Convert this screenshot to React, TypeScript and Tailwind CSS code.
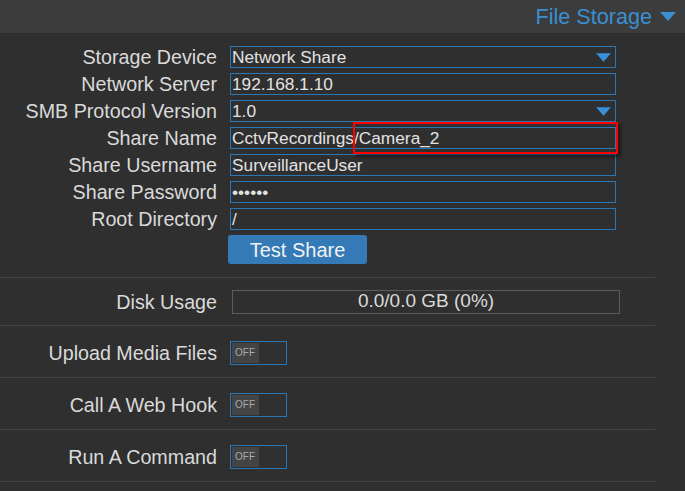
import React from "react";

const FONT = { fontFamily: '"Liberation Sans", Arial, sans-serif' };

function Caret({ className = "" }: { className?: string }) {
  return (
    <svg viewBox="0 0 16 9" className={className} fill="currentColor">
      <path d="M0 0 H16 L8 9 Z" />
    </svg>
  );
}

function Label({ children }: { children: React.ReactNode }) {
  return (
    <div className="w-[217px] shrink-0 text-right text-[19.7px] leading-[22px] text-[#dadada] whitespace-nowrap">
      {children}
    </div>
  );
}

function TextField({ value, select }: { value: string; select?: boolean }) {
  return (
    <div className="flex h-[22px] w-[386px] items-center border border-[#2b77b3] bg-[#2f2f2f] pl-[1px] pr-[4px] text-[17.3px] text-[#e2e2e2]">
      <span className="flex-1 whitespace-nowrap pt-[1px] leading-none">{value}</span>
      {select && <Caret className="h-[9px] w-[15px] text-[#3790d8]" />}
    </div>
  );
}

function FieldRow({ label, value, select }: { label: string; value: string; select?: boolean }) {
  return (
    <div className="flex items-center gap-[13px]">
      <Label>{label}</Label>
      <TextField value={value} select={select} />
    </div>
  );
}

function Toggle() {
  return (
    <div className="flex h-[24px] w-[57px] border border-[#2b77b3] bg-[#303030] p-[1px]">
      <div className="flex w-[27px] items-center bg-[#444444] pl-[3px] text-[10px] text-[#a9a9a9]">
        OFF
      </div>
    </div>
  );
}

function ToggleRow({ label }: { label: string }) {
  return (
    <div className="flex h-[52px] w-[655px] items-center gap-[13px] border-b border-[#444444] pt-[2px]">
      <Label>{label}</Label>
      <Toggle />
    </div>
  );
}

export default function App() {
  return (
    <div className="h-[491px] w-[685px] overflow-hidden bg-[#2f2f2f]" style={FONT}>
      <div className="flex h-[33px] items-center justify-end gap-[8px] bg-[#3c3c3c] pr-[9px]">
        <span className="text-[21.6px] leading-none text-[#3a8fd2]">File Storage</span>
        <Caret className="h-[9px] w-[16px] text-[#3a8fd2]" />
      </div>

      <div className="flex flex-col gap-[5px] pt-[13px]">
        <FieldRow label="Storage Device" value="Network Share" select />
        <FieldRow label="Network Server" value="192.168.1.10" />
        <FieldRow label="SMB Protocol Version" value="1.0" select />
        <div className="relative">
          <FieldRow label="Share Name" value="CctvRecordings/Camera_2" />
          <div className="absolute left-[353px] top-[-5px] h-[32px] w-[265px] border-2 border-[#ff0000] shadow-[3px_3px_4px_rgba(0,0,0,0.45)]" />
        </div>
        <FieldRow label="Share Username" value="SurveillanceUser" />
        <FieldRow label="Share Password" value="••••••" />
        <FieldRow label="Root Directory" value="/" />
      </div>

      <div className="mt-[5px] pl-[228px]">
        <button className="h-[29px] w-[139px] rounded-[3px] bg-[#337ab7] text-[20px] text-[#f2f2f2]">
          Test Share
        </button>
      </div>

      <div className="mt-[13px] w-[655px] border-t border-[#444444]" />

      <div className="flex h-[48px] w-[655px] items-center gap-[15px] border-b border-[#444444]">
        <Label>Disk Usage</Label>
        <div className="flex h-[24px] w-[388px] items-center justify-center border border-[#5c5c5c] text-[19px] text-[#dadada]">
          0.0/0.0 GB (0%)
        </div>
      </div>

      <ToggleRow label="Upload Media Files" />
      <ToggleRow label="Call A Web Hook" />
      <ToggleRow label="Run A Command" />
    </div>
  );
}
